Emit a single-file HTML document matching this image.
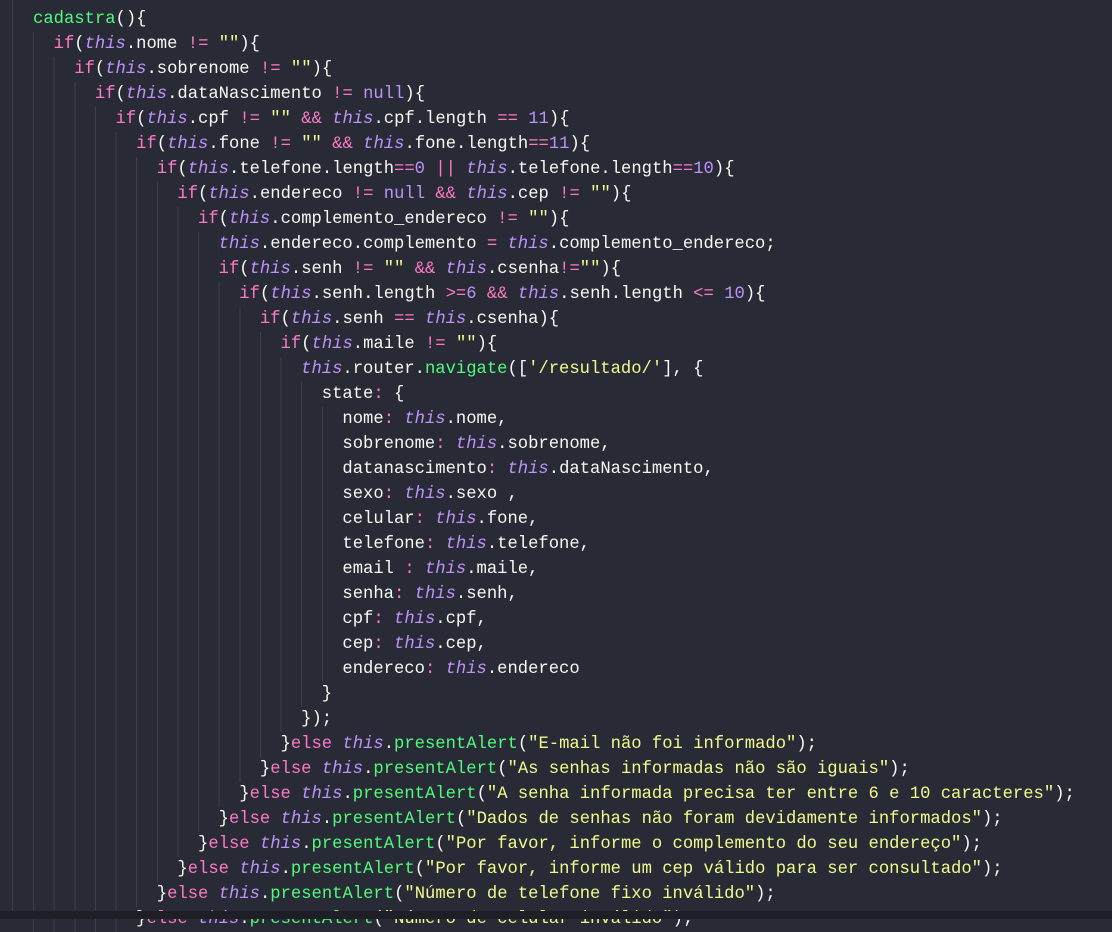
<!DOCTYPE html>
<html><head><meta charset="utf-8"><style>
html,body{margin:0;padding:0;background:#282a36;width:1112px;height:919px;overflow:hidden}
#ed{position:absolute;left:0;top:7px;font-family:"Liberation Mono","DejaVu Sans Mono",monospace;font-size:17.2px;color:#f8f8f2}
.l{white-space:pre;height:25px;line-height:25px;padding-left:calc(33px + var(--n)*2ch);background-image:repeating-linear-gradient(to right,#3c3f4c 0 1px,transparent 1px 2ch);background-repeat:no-repeat;background-position:33px 0;background-size:calc(var(--n)*2ch) 100%}
.k{color:#ff79c6}.t{color:#bd93f9;font-style:italic}.f{color:#50fa7b}.s{color:#f1fa8c}.n{color:#bd93f9}
#g{position:absolute;left:12px;top:0;width:1px;height:919px;background:#3c3f4c}
#b{position:absolute;left:0;top:911px;width:1112px;height:8px;background:#1e1f26}
</style></head><body>
<div id="g"></div>
<div id="ed"><div class="l" style="--n:0"><span class="f">cadastra</span>(){</div><div class="l" style="--n:1"><span class="k">if</span>(<span class="t">this</span>.nome <span class="k">!=</span> <span class="s">""</span>){</div><div class="l" style="--n:2"><span class="k">if</span>(<span class="t">this</span>.sobrenome <span class="k">!=</span> <span class="s">""</span>){</div><div class="l" style="--n:3"><span class="k">if</span>(<span class="t">this</span>.dataNascimento <span class="k">!=</span> <span class="n">null</span>){</div><div class="l" style="--n:4"><span class="k">if</span>(<span class="t">this</span>.cpf <span class="k">!=</span> <span class="s">""</span> <span class="k">&amp;&amp;</span> <span class="t">this</span>.cpf.length <span class="k">==</span> <span class="n">11</span>){</div><div class="l" style="--n:5"><span class="k">if</span>(<span class="t">this</span>.fone <span class="k">!=</span> <span class="s">""</span> <span class="k">&amp;&amp;</span> <span class="t">this</span>.fone.length<span class="k">==</span><span class="n">11</span>){</div><div class="l" style="--n:6"><span class="k">if</span>(<span class="t">this</span>.telefone.length<span class="k">==</span><span class="n">0</span> <span class="k">||</span> <span class="t">this</span>.telefone.length<span class="k">==</span><span class="n">10</span>){</div><div class="l" style="--n:7"><span class="k">if</span>(<span class="t">this</span>.endereco <span class="k">!=</span> <span class="n">null</span> <span class="k">&amp;&amp;</span> <span class="t">this</span>.cep <span class="k">!=</span> <span class="s">""</span>){</div><div class="l" style="--n:8"><span class="k">if</span>(<span class="t">this</span>.complemento_endereco <span class="k">!=</span> <span class="s">""</span>){</div><div class="l" style="--n:9"><span class="t">this</span>.endereco.complemento <span class="k">=</span> <span class="t">this</span>.complemento_endereco;</div><div class="l" style="--n:9"><span class="k">if</span>(<span class="t">this</span>.senh <span class="k">!=</span> <span class="s">""</span> <span class="k">&amp;&amp;</span> <span class="t">this</span>.csenha<span class="k">!=</span><span class="s">""</span>){</div><div class="l" style="--n:10"><span class="k">if</span>(<span class="t">this</span>.senh.length <span class="k">&gt;=</span><span class="n">6</span> <span class="k">&amp;&amp;</span> <span class="t">this</span>.senh.length <span class="k">&lt;=</span> <span class="n">10</span>){</div><div class="l" style="--n:11"><span class="k">if</span>(<span class="t">this</span>.senh <span class="k">==</span> <span class="t">this</span>.csenha){</div><div class="l" style="--n:12"><span class="k">if</span>(<span class="t">this</span>.maile <span class="k">!=</span> <span class="s">""</span>){</div><div class="l" style="--n:13"><span class="t">this</span>.router.<span class="f">navigate</span>([<span class="s">'/resultado/'</span>], {</div><div class="l" style="--n:14">state<span class="k">:</span> {</div><div class="l" style="--n:15">nome<span class="k">:</span> <span class="t">this</span>.nome,</div><div class="l" style="--n:15">sobrenome<span class="k">:</span> <span class="t">this</span>.sobrenome,</div><div class="l" style="--n:15">datanascimento<span class="k">:</span> <span class="t">this</span>.dataNascimento,</div><div class="l" style="--n:15">sexo<span class="k">:</span> <span class="t">this</span>.sexo ,</div><div class="l" style="--n:15">celular<span class="k">:</span> <span class="t">this</span>.fone,</div><div class="l" style="--n:15">telefone<span class="k">:</span> <span class="t">this</span>.telefone,</div><div class="l" style="--n:15">email <span class="k">:</span> <span class="t">this</span>.maile,</div><div class="l" style="--n:15">senha<span class="k">:</span> <span class="t">this</span>.senh,</div><div class="l" style="--n:15">cpf<span class="k">:</span> <span class="t">this</span>.cpf,</div><div class="l" style="--n:15">cep<span class="k">:</span> <span class="t">this</span>.cep,</div><div class="l" style="--n:15">endereco<span class="k">:</span> <span class="t">this</span>.endereco</div><div class="l" style="--n:14">}</div><div class="l" style="--n:13">});</div><div class="l" style="--n:12">}<span class="k">else</span> <span class="t">this</span>.<span class="f">presentAlert</span>(<span class="s">"E-mail não foi informado"</span>);</div><div class="l" style="--n:11">}<span class="k">else</span> <span class="t">this</span>.<span class="f">presentAlert</span>(<span class="s">"As senhas informadas não são iguais"</span>);</div><div class="l" style="--n:10">}<span class="k">else</span> <span class="t">this</span>.<span class="f">presentAlert</span>(<span class="s">"A senha informada precisa ter entre 6 e 10 caracteres"</span>);</div><div class="l" style="--n:9">}<span class="k">else</span> <span class="t">this</span>.<span class="f">presentAlert</span>(<span class="s">"Dados de senhas não foram devidamente informados"</span>);</div><div class="l" style="--n:8">}<span class="k">else</span> <span class="t">this</span>.<span class="f">presentAlert</span>(<span class="s">"Por favor, informe o complemento do seu endereço"</span>);</div><div class="l" style="--n:7">}<span class="k">else</span> <span class="t">this</span>.<span class="f">presentAlert</span>(<span class="s">"Por favor, informe um cep válido para ser consultado"</span>);</div><div class="l" style="--n:6">}<span class="k">else</span> <span class="t">this</span>.<span class="f">presentAlert</span>(<span class="s">"Número de telefone fixo inválido"</span>);</div><div class="l" style="--n:5">}<span class="k">else</span> <span class="t">this</span>.<span class="f">presentAlert</span>(<span class="s">"Número de celular inválido"</span>);</div></div>
<div id="b"></div>
</body></html>
